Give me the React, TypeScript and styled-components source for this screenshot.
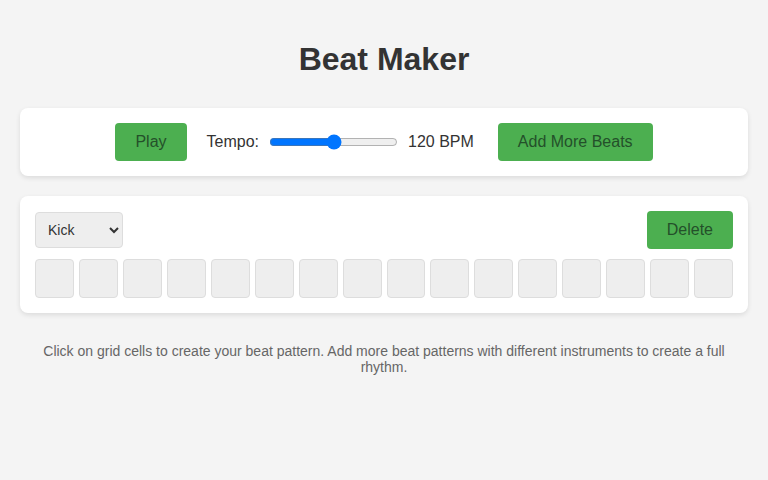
import React, { useState } from "react";
import styled, { createGlobalStyle } from "styled-components";

const Global = createGlobalStyle`
  html, body { margin: 0; padding: 0; }
  body {
    background: #f4f4f4;
    font-family: "Liberation Sans", Arial, sans-serif;
    color: #333;
    padding: 20px;
  }
`;

const Title = styled.h1`
  text-align: center;
  font-size: 32px;
  font-weight: bold;
  color: #333;
  margin: 21px 0 30px;
  line-height: 37px;
`;

const Card = styled.div`
  background: #fff;
  border-radius: 8px;
  box-shadow: 0 2px 5px rgba(0, 0, 0, 0.1);
  padding: 15px;
  margin-bottom: 20px;
`;

const Controls = styled(Card)`
  display: flex;
  align-items: center;
  justify-content: center;
  gap: 20px;
`;

const Button = styled.button`
  background: #4caf50;
  color: #24502a;
  border: none;
  border-radius: 4px;
  padding: 10px 20px;
  font-family: "Liberation Sans", Arial, sans-serif;
  font-size: 16px;
  line-height: 18px;
  cursor: pointer;
`;

const TempoGroup = styled.div`
  display: flex;
  align-items: center;
  gap: 10px;
  font-size: 16px;
  margin-right: 4px;
`;

const Range = styled.input`
  width: 129px;
  margin: 0;
`;

const RowHeader = styled.div`
  display: flex;
  align-items: center;
  justify-content: space-between;
  margin-bottom: 10px;
`;

const Select = styled.select`
  width: 88px;
  height: 36px;
  padding: 8px;
  font-family: "Liberation Sans", Arial, sans-serif;
  font-size: 14px;
  color: #333;
  background: #eee;
  border: 1px solid #ddd;
  border-radius: 4px;
`;

const Grid = styled.div`
  display: grid;
  grid-template-columns: repeat(16, 1fr);
  gap: 5px;
`;

const Cell = styled.div<{ $on: boolean }>`
  height: 39px;
  box-sizing: border-box;
  background: ${(p) => (p.$on ? "#4caf50" : "#eee")};
  border: 1px solid #ddd;
  border-radius: 4px;
  cursor: pointer;
`;

const Note = styled.p`
  text-align: center;
  color: #666;
  font-size: 14px;
  line-height: 16px;
  margin: 30px 0 0;
`;

export default function App() {
  const [tempo, setTempo] = useState(120);
  const [cells, setCells] = useState<boolean[]>(Array(16).fill(false));
  return (
    <>
      <Global />
      <Title>Beat Maker</Title>
      <Controls>
        <Button>Play</Button>
        <TempoGroup>
          <label>Tempo:</label>
          <Range
            type="range"
            min={60}
            max={180}
            value={tempo}
            onChange={(e) => setTempo(Number(e.target.value))}
          />
          <span>{tempo} BPM</span>
        </TempoGroup>
        <Button>Add More Beats</Button>
      </Controls>
      <Card>
        <RowHeader>
          <Select defaultValue="kick">
            <option value="kick">Kick</option>
            <option value="snare">Snare</option>
            <option value="hihat">Hi-Hat</option>
            <option value="clap">Clap</option>
          </Select>
          <Button>Delete</Button>
        </RowHeader>
        <Grid>
          {cells.map((on, i) => (
            <Cell
              key={i}
              $on={on}
              onClick={() => setCells(cells.map((c, j) => (j === i ? !c : c)))}
            />
          ))}
        </Grid>
      </Card>
      <Note>
        Click on grid cells to create your beat pattern. Add more beat patterns with different instruments to create a full rhythm.
      </Note>
    </>
  );
}
